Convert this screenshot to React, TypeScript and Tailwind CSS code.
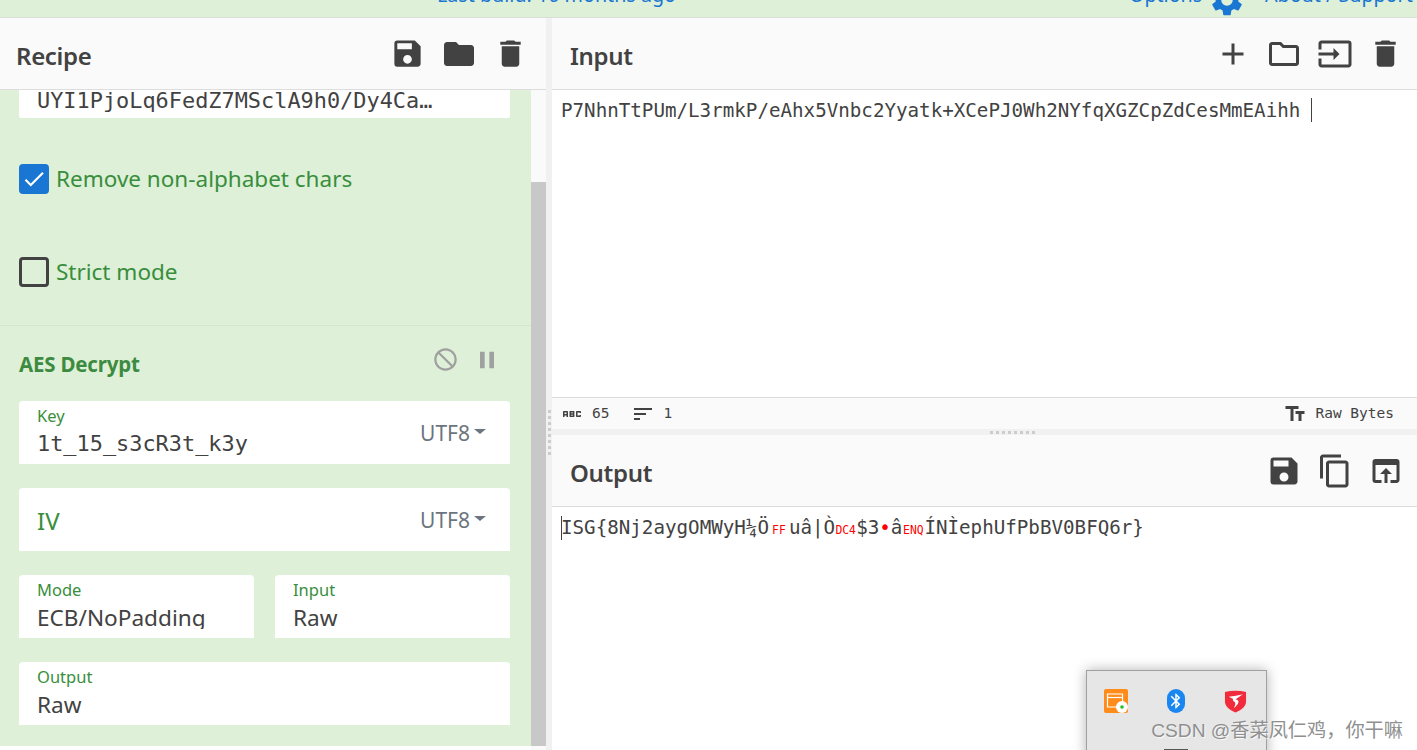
import { MdAdd, MdContentCopy, MdDelete, MdDoNotDisturb, MdFolder, MdInput, MdOpenInBrowser, MdOutlineFolder, MdPause, MdSave, MdSettings, MdSort, MdTextFields, MdCheck, MdBluetooth } from 'react-icons/md';

const sans = 'font-["Noto_Sans",sans-serif]';
const mono = 'font-["DejaVu_Sans_Mono",monospace]';

const AbcIcon = () => (
  <svg viewBox="0 0 24 24" className="w-[24px] h-[24px] fill-[#424242]">
    <path d="M21 11h-1.5v-.5h-2v3h2V13H21v1c0 .55-.45 1-1 1h-3c-.55 0-1-.45-1-1v-4c0-.55.45-1 1-1h3c.55 0 1 .45 1 1v1zM8 10v5H6.5v-1.5h-2V15H3v-5c0-.55.45-1 1-1h3c.55 0 1 .45 1 1zm-1.5.5h-2V12h2v-1.5zm7 1.5c.55 0 1 .45 1 1v1c0 .55-.45 1-1 1h-4V9h4c.55 0 1 .45 1 1v1c0 .55-.45 1-1 1zM11 10.5v.75h2v-.75h-2zm2 2.25h-2v.75h2v-.75z" />
  </svg>
);

const Ctrl = ({ children, className }: { children: string; className: string }) => (
  <span className={`inline-block text-center text-[#f00] text-[11.4px] ${className}`}>{children}</span>
);

const Utf8 = () => (
  <div className="absolute right-[24px] top-[20px] flex items-center gap-[4px] text-[21px] leading-[24px] text-[#6c757d]">
    UTF8
    <span className="w-0 h-0 mb-[3px] border-x-[6px] border-x-transparent border-t-[5px] border-t-[#6c757d]" />
  </div>
);

const Field = ({ label, value, className = '' }: { label: string; value: string; className?: string }) => (
  <div className={`h-[63px] bg-white rounded-t-[4px] overflow-hidden ${className}`}>
    <div className="pl-[18px] pt-[4px] text-[16.5px] leading-[22px] text-[#388e3c]">{label}</div>
    <div className="pl-[18px] h-[28px] overflow-hidden text-[22.6px] leading-[34px] text-[#424242]">{value}</div>
  </div>
);

export default function App() {
  return (
    <div className={`relative w-[1417px] h-[750px] overflow-hidden flex flex-col bg-white text-[#424242] ${sans}`}>
      {/* banner, mostly scrolled off the top */}
      <div className="h-[18px] shrink-0 bg-[#dff0d8] border-b border-[#d9dfd6] overflow-hidden relative text-[#1976d2] text-[19.7px] leading-[24px]">
        <span className="absolute left-[437px] top-[-17px] whitespace-nowrap">Last build: 10 months ago</span>
        <span className="absolute left-[1129px] top-[-17px] whitespace-nowrap">Options</span>
        <MdSettings className="absolute left-[1208px] top-[-19px] w-[38px] h-[38px]" />
        <span className="absolute left-[1265px] top-[-17px] whitespace-nowrap">About / Support</span>
      </div>

      <div className="flex-1 flex min-h-0">
        {/* recipe column */}
        <div className="w-[546px] shrink-0 flex flex-col">
          <div className="h-[72px] shrink-0 flex items-center justify-between pl-[16px] pr-[18px] bg-[#fafafa] border-b border-[#ddd]">
            <span className="text-[24px] font-semibold tracking-[-0.3px] mt-[5px]">Recipe</span>
            <div className="flex items-center gap-[16px] text-[#424242]">
              <MdSave className="w-[35px] h-[35px]" />
              <MdFolder className="w-[36px] h-[36px]" />
              <MdDelete className="w-[35px] h-[35px]" />
            </div>
          </div>
          <div className="flex-1 flex min-h-0">
            <div className="w-[531px] shrink-0 bg-[#dff0d8] flex flex-col h-[656px]">
              <div className="h-[236px] shrink-0 border-b border-[#d4e6cc] px-[19px] pr-[21px]">
                <div className={`h-[28px] bg-white rounded-b-[2px] pl-[18px] text-[21.9px] leading-[21px] whitespace-nowrap overflow-hidden ${mono}`}>
                  UYI1PjoLq6FedZ7MSclA9h0/Dy4Ca…
                </div>
                <div className="flex items-center gap-[7px] mt-[45px] h-[32px] text-[#388e3c] text-[22.5px]">
                  <span className="w-[30px] h-[30px] rounded-[4px] bg-[#1976d2] flex items-center justify-center">
                    <MdCheck className="w-[26px] h-[26px] text-white" />
                  </span>
                  Remove non-alphabet chars
                </div>
                <div className="flex items-center gap-[7px] mt-[61px] h-[32px] text-[#388e3c] text-[22.5px]">
                  <span className="w-[30px] h-[30px] rounded-[4px] border-[3px] border-[#424242]" />
                  Strict mode
                </div>
              </div>
              <div className="flex-1 px-[19px] pr-[21px] pt-[21px]">
                <div className="flex items-center justify-between h-[36px] mb-[18px]">
                  <span className="text-[20.5px] font-bold tracking-[-0.2px] text-[#3d8b40] -mt-[2px]">AES Decrypt</span>
                  <div className="flex items-center gap-[14px] text-[#a0a0a0] -mt-[11px]">
                    <MdDoNotDisturb className="w-[27px] h-[27px]" />
                    <MdPause className="w-[28px] h-[28px] mr-[9px]" />
                  </div>
                </div>
                <div className="flex flex-col gap-[24px]">
                  <div className="relative h-[63px] bg-white rounded-t-[4px]">
                    <div className="pl-[18px] pt-[4px] text-[16.5px] leading-[22px] text-[#388e3c]">Key</div>
                    <div className={`pl-[18px] text-[21.9px] leading-[34px] ${mono}`}>1t_15_s3cR3t_k3y</div>
                    <Utf8 />
                  </div>
                  <div className="relative h-[63px] bg-white rounded-t-[4px] pl-[18px] pt-[2px] flex items-center text-[24px] text-[#388e3c]">
                    IV
                    <Utf8 />
                  </div>
                  <div className="flex gap-[21px]">
                    <Field label="Mode" value="ECB/NoPadding" className="w-[235px]" />
                    <Field label="Input" value="Raw" className="flex-1" />
                  </div>
                  <Field label="Output" value="Raw" />
                </div>
              </div>
            </div>
            {/* scrollbar */}
            <div className="flex-1 bg-[#fafafa] flex flex-col">
              <div className="h-[92px] shrink-0" />
              <div className="h-[564px] bg-[#c8c8c8]" />
            </div>
          </div>
        </div>

        {/* gutter */}
        <div className="w-[6px] shrink-0 bg-[#f1f1f1] flex flex-col items-center pt-[392px] gap-[3px]">
          {Array.from({ length: 8 }).map((_, i) => (
            <span key={i} className="w-[3px] h-[3px] bg-[#ccc]" />
          ))}
        </div>

        {/* input and output */}
        <div className="flex-1 flex flex-col min-w-0">
          <div className="h-[72px] shrink-0 flex items-center justify-between pl-[18px] pr-[14px] bg-[#fafafa] border-b border-[#ddd]">
            <span className="text-[24px] font-semibold tracking-[-0.3px] mt-[5px]">Input</span>
            <div className="flex items-center gap-[15px]">
              <MdAdd className="w-[36px] h-[36px]" />
              <MdOutlineFolder className="w-[36px] h-[36px]" />
              <MdInput className="w-[36px] h-[36px]" />
              <MdDelete className="w-[35px] h-[35px]" />
            </div>
          </div>
          <div className={`h-[307px] shrink-0 pl-[9px] pt-[8px] text-[19.2px] leading-[26px] whitespace-nowrap ${mono}`}>
            P7NhnTtPUm/L3rmkP/eAhx5Vnbc2Yyatk+XCePJ0Wh2NYfqXGZCpZdCesMmEAihh
            <span className="inline-block align-top w-px h-[24px] bg-[#424242] ml-[11px]" />
          </div>
          <div className={`h-[32px] shrink-0 flex items-center px-[8px] bg-[#fafafa] border-t border-[#ddd] text-[14.5px] ${mono}`}>
            <AbcIcon />
            <span className="ml-[8px]">65</span>
            <MdSort className="ml-[22px] w-[24px] h-[24px]" />
            <span className="ml-[8px]">1</span>
            <MdTextFields className="ml-auto w-[24px] h-[24px]" />
            <span className="ml-[8px] mr-[15px]">Raw Bytes</span>
          </div>
          <div className="h-[6px] shrink-0 bg-[#f1f1f1] flex items-center gap-[3px] pl-[438px]">
            {Array.from({ length: 8 }).map((_, i) => (
              <span key={i} className="w-[3px] h-[3px] bg-[#ccc]" />
            ))}
          </div>
          <div className="h-[72px] shrink-0 flex items-center justify-between pl-[18px] pr-[13px] bg-[#fafafa] border-b border-[#ddd]">
            <span className="text-[24px] font-semibold tracking-[-0.3px] mt-[5px]">Output</span>
            <div className="flex items-center gap-[15px]">
              <MdSave className="w-[36px] h-[36px]" />
              <MdContentCopy className="w-[36px] h-[36px]" />
              <MdOpenInBrowser className="w-[36px] h-[36px]" />
            </div>
          </div>
          <div className={`flex-1 pl-[9px] pt-[8px] text-[19.2px] leading-[26px] whitespace-nowrap relative ${mono}`}>
            <span className="absolute left-[9px] top-[9px] w-px h-[24px] bg-[#424242]" />
            ISG{'{'}8Nj2aygOMWyH¼Ö<Ctrl className="w-[20px]">FF</Ctrl>uâ|Ò<Ctrl className="w-[21px]">DC4</Ctrl>$3<span className="text-[#f00]">•</span>â<Ctrl className="w-[22px]">ENQ</Ctrl>ÍNÌephUfPbBV0BFQ6r{'}'}
          </div>
        </div>
      </div>

      {/* windows tray flyout */}
      <div className="absolute left-[1086px] top-[670px] w-[181px] h-[90px] bg-[#e6e6e6] border border-[#a0a0a0] shadow-[0_0_12px_rgba(0,0,0,0.3)]">
        <div className="flex items-center gap-[39px] pl-[17px] pt-[18px]">
          <svg viewBox="0 0 24 24" className="w-[24px] h-[24px]">
            <rect x="0" y="0" width="24" height="24" rx="2" fill="#ff8c1a" />
            <path d="M3.5 5h15v13h-15z" fill="none" stroke="#fff" strokeWidth="1.2" />
            <path d="M3.5 8.5h15" stroke="#fff" strokeWidth="1.2" />
            <circle cx="18" cy="18" r="6" fill="#fff" />
            <circle cx="18" cy="18" r="1.8" fill="#22c322" />
          </svg>
          <div className="w-[18px] h-[24px] rounded-[9px] bg-[#1a86f0] flex items-center justify-center">
            <MdBluetooth className="w-[18px] h-[18px] text-white" />
          </div>
          <svg viewBox="0 0 24 24" className="w-[23px] h-[24px]">
            <path d="M1 2.5C8 .8 16 .8 23 2.5v10c0 5-5 9-11 11.5C6 21.500 1 17.500 1 12.500z" fill="#f12b3c" />
            <path d="M5 7.500c5-.5 10-1.500 15-2.500-3 2-6 3.500-8 5.500 2.500 0 3.500 1.500 3 3-.5 2-2.500 4-4.500 6 .5-2.500 2-4.500 1-6-1-1.200-3-1.500-2-3.500L5 7.500z" fill="#fff" />
          </svg>
        </div>
        <div className="absolute left-[77px] top-[78px] w-[24px] h-[2px] bg-[#555]" />
      </div>

      {/* csdn watermark */}
      <div className={`absolute right-[14px] top-[719px] text-[19.2px] leading-[24px] text-[#8f8f8f] whitespace-nowrap [text-shadow:1px_1px_1px_rgba(255,255,255,0.8)] font-["Liberation_Sans","Noto_Sans_CJK_SC",sans-serif]`}>
        CSDN @香菜凤仁鸡，你干嘛
      </div>
    </div>
  );
}
